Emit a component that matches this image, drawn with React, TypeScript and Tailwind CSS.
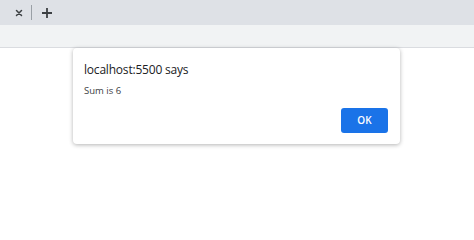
export default function App() {
  return (
    <div className="relative w-[474px] h-[215px] overflow-hidden bg-white font-['Open_Sans',_sans-serif]">
      {/* tab strip */}
      <div className="flex h-[25px] items-center bg-[#dee1e6] pl-[13px] text-[#3c4043]">
        <svg width="12" height="12" viewBox="0 0 12 12" className="mt-[1px]">
          <path d="M3.5 3.5l5 5M8.5 3.5l-5 5" stroke="#3c4043" strokeWidth="1.5" strokeLinecap="round" />
        </svg>
        <div className="ml-[6px] h-[15px] w-px bg-[#9aa0a6]" />
        <svg width="14" height="14" viewBox="0 0 14 14" className="ml-[8px]">
          <path d="M7 2v10M2 7h10" stroke="#3c4043" strokeWidth="1.8" />
        </svg>
      </div>
      {/* toolbar */}
      <div className="h-[23px] border-b border-[#dadce0] bg-[#f1f3f4]" />

      {/* alert dialog */}
      <div className="absolute left-[73px] top-[48px] w-[327px] rounded-[4px] bg-white px-[11px] pt-[13px] pb-[11px] shadow-[0_1px_4px_rgba(0,0,0,0.3)]">
        <div className="text-[12px] leading-[18px] tracking-[-0.2px] text-[#202124]">localhost:5500 says</div>
        <div className="mt-[5px] text-[9.5px] leading-[14px] text-[#3c4043]">Sum is 6</div>
        <div className="mt-[10px] flex justify-end">
          <button className="mr-[1px] h-[25px] w-[47px] rounded-[3px] bg-[#1a73e8] text-[10px] font-semibold text-white">
            OK
          </button>
        </div>
      </div>
    </div>
  );
}
